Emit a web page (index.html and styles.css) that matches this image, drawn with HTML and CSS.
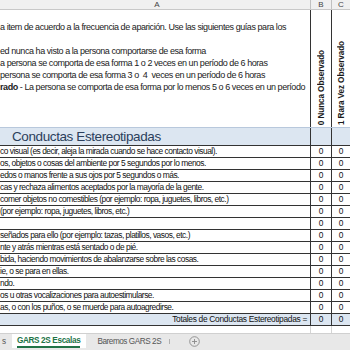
FILE: index.html
```html
<!DOCTYPE html>
<html lang="es">
<head>
<meta charset="utf-8">
<link rel="stylesheet" href="styles.css">
</head>
<body>
<div class="app">
  <div class="colheads">
    <div class="ch ch-a">A</div>
    <div class="ch ch-b">B</div>
    <div class="ch ch-c">C</div>
  </div>

  <div class="row intro">
    <div class="a intro-text">
      <p>a item de acuerdo a la frecuencia de aparición. Use las siguientes guías para los</p>
      <p>&nbsp;</p>
      <p>ed nunca ha visto a la persona comportarse de esa forma</p>
      <p>a persona se comporta de esa forma 1 o 2 veces en un período de 6 horas</p>
      <p>persona se comporta de esa forma 3 o&nbsp; 4&nbsp; veces en un período de 6 horas</p>
      <p><b>rado</b> - La persona se comporta de esa forma por lo menos 5 o 6 veces en un período</p>
    </div>
    <div class="b vert"><span>0 Nunca Observado</span></div>
    <div class="c vert"><span>1 Rara Vez Observado</span></div>
  </div>

  <div class="row section">
    <div class="a title">Conductas Estereotipadas</div>
    <div class="b"></div>
    <div class="c"></div>
  </div>

  <div class="row data"><div class="a">co visual (es decir, aleja la mirada cuando se hace contacto visual).</div><div class="b">0</div><div class="c">0</div></div>
  <div class="row data"><div class="a">os, objetos o cosas del ambiente por 5 segundos por lo menos.</div><div class="b">0</div><div class="c">0</div></div>
  <div class="row data"><div class="a">edos o manos frente a sus ojos por 5 segundos o más.</div><div class="b">0</div><div class="c">0</div></div>
  <div class="row data"><div class="a">cas y rechaza alimentos aceptados por la mayoría de la gente.</div><div class="b">0</div><div class="c">0</div></div>
  <div class="row data"><div class="a">comer objetos no comestibles (por ejemplo: ropa, juguetes, libros, etc.)</div><div class="b">0</div><div class="c">0</div></div>
  <div class="row data"><div class="a">(por ejemplo: ropa, juguetes, libros, etc.)</div><div class="b">0</div><div class="c">0</div></div>
  <div class="row data"><div class="a"></div><div class="b">0</div><div class="c">0</div></div>
  <div class="row data"><div class="a">señados para ello (por ejemplo: tazas, platillos, vasos, etc.)</div><div class="b">0</div><div class="c">0</div></div>
  <div class="row data"><div class="a">nte y atrás mientras está sentado o de pié.</div><div class="b">0</div><div class="c">0</div></div>
  <div class="row data"><div class="a">bida, haciendo movimientos de abalanzarse sobre las cosas.</div><div class="b">0</div><div class="c">0</div></div>
  <div class="row data"><div class="a">ie, o se para en ellas.</div><div class="b">0</div><div class="c">0</div></div>
  <div class="row data"><div class="a">ndo.</div><div class="b">0</div><div class="c">0</div></div>
  <div class="row data"><div class="a">os u otras vocalizaciones para autoestimularse.</div><div class="b">0</div><div class="c">0</div></div>
  <div class="row data"><div class="a">as, o con los puños, o se muerde para autoagredirse.</div><div class="b">0</div><div class="c">0</div></div>
  <div class="row data total"><div class="a">Totales de Conductas Estereotipadas =</div><div class="b">0</div><div class="c">0</div></div>
  <div class="row empty"><div class="a"></div><div class="b"></div><div class="c"></div></div>

  <div class="tabs">
    <div class="tab tab-cut">s</div>
    <div class="tab tab-active"><span>GARS 2S Escalas</span></div>
    <div class="tab tab-plain">Baremos GARS 2S</div>
    <div class="tab-sep"></div>
    <div class="tab-add">
      <svg width="11" height="11" viewBox="0 0 11 11"><circle cx="5.5" cy="5.5" r="4.8" fill="none" stroke="#8a8a8a" stroke-width="0.9"/><path d="M5.5 3v5M3 5.5h5" stroke="#8a8a8a" stroke-width="0.9"/></svg>
    </div>
  </div>
</div>
</body>
</html>
```

FILE: styles.css
```css
* { box-sizing: border-box; }
html, body { margin: 0; padding: 0; }
body {
  width: 350px;
  height: 350px;
  overflow: hidden;
  background: #fff;
  font-family: "Liberation Sans", Arial, sans-serif;
}
.app {
  width: 350px;
  height: 350px;
  display: flex;
  flex-direction: column;
  overflow: hidden;
}
.colheads {
  height: 10px;
  flex: none;
  display: grid;
  grid-template-columns: 311px 21px 18px;
  background: #f0f0f0;
  border-bottom: 1px solid #c8c8c8;
  font-size: 8px;
  color: #444;
  line-height: 9px;
}
.ch { text-align: center; border-right: 1px solid #c0c0c0; }
.ch-a { padding-left: 4px; }
.ch-c { border-right: none; }

.row {
  display: grid;
  grid-template-columns: 311px 21px 18px;
  flex: none;
}
.row > .a { border-right: 1px solid #333; overflow: hidden; white-space: nowrap; }
.row > .b { border-right: 1px solid #333; }

.intro { height: 117px; }
.intro-text {
  padding-top: 11px;
  font-size: 9px;
  line-height: 12px;
  color: #222;
  letter-spacing: -0.44px;
}
.intro-text p { margin: 0; }
.vert {
  display: flex;
  justify-content: center;
  align-items: flex-end;
  padding-bottom: 2px;
}
.vert span {
  writing-mode: vertical-rl;
  transform: rotate(180deg);
  font-size: 8.2px;
  font-weight: bold;
  color: #1a1a1a;
  line-height: 9px;
  white-space: nowrap;
  letter-spacing: -0.1px;
}

.section {
  height: 19px;
  background: #dce6f1;
  border-top: 1px solid #b8c8dc;
  border-bottom: 1px solid #333;
}
.title {
  font-size: 13.5px;
  color: #2b3f5c;
  line-height: 18px;
  padding-left: 12px;
  letter-spacing: -0.4px;
}

.data {
  height: 12px;
  font-size: 8.4px;
  line-height: 11px;
  color: #111;
}
.data > div { border-bottom: 1px solid #333; }
.data > .a { letter-spacing: -0.48px; }
.data > .b, .data > .c { text-align: center; letter-spacing: 0; }
.total > div { background: #dce6f1; }
.total > .a { text-align: right; padding-right: 3px; letter-spacing: -0.3px; }

.empty { height: 7px; }
.empty > .a, .empty > .b { border-right: 1px solid #d4d4d4; }

.tabs {
  flex: 1;
  background: #e8e8e8;
  border-top: 1px solid #d0d0d0;
  display: flex;
  align-items: stretch;
  font-size: 8.2px;
  color: #555;
  padding-bottom: 2px;
  letter-spacing: -0.2px;
}
.tab {
  display: flex;
  align-items: center;
  white-space: nowrap;
}
.tab-cut { padding: 0 6px 0 2px; }
.tab-active {
  background: #fff;
  color: #217346;
  font-weight: bold;
  padding: 0 6px 0 5px;
  letter-spacing: -0.35px;
}
.tab-active span { border-bottom: 2px solid #217346; line-height: 10px; padding-top: 2px; }
.tab-plain { padding: 0 8px 0 11px; letter-spacing: -0.45px; }
.tab-sep { width: 1px; background: #b0b0b0; margin: 5px 0 4px 0; }
.tab-add { display: flex; align-items: center; padding-left: 19px; }
```
